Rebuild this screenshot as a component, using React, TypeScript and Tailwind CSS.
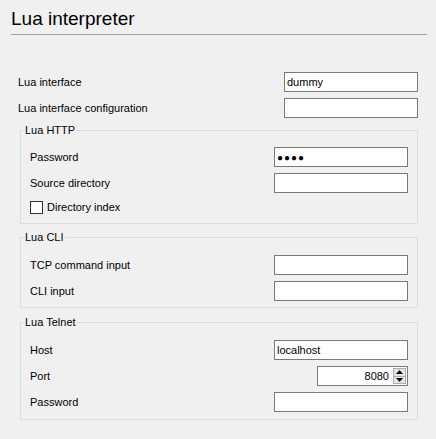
import type { ReactNode } from 'react'

const FONT = { fontFamily: '"Liberation Sans", Arial, sans-serif' }

function TextBox({ value = '', password = false }: { value?: string; password?: boolean }) {
  return (
    <div className="flex h-[20px] w-[134px] items-center border border-[#7a7a7a] bg-white px-[2px] text-[11px] text-black">
      {password ? <span className="text-[10px] tracking-[1px]">{'●'.repeat(value.length)}</span> : value}
    </div>
  )
}

function SpinBox({ value }: { value: string }) {
  return (
    <div className="flex h-[20px] w-[91px] items-center border border-[#7a7a7a] bg-white text-[11px] text-black">
      <span className="flex-1 pr-[4px] text-right">{value}</span>
      <div className="mr-[1px] flex h-[16px] w-[13px] flex-col border border-[#adadad] bg-[#e5e5e5]">
        <div className="flex flex-1 items-center justify-center border-b border-[#adadad]">
          <svg width="7" height="4" viewBox="0 0 7 4">
            <path d="M0 4 L3.5 0 L7 4 Z" fill="#000" />
          </svg>
        </div>
        <div className="flex flex-1 items-center justify-center">
          <svg width="7" height="4" viewBox="0 0 7 4">
            <path d="M0 0 L3.5 4 L7 0 Z" fill="#000" />
          </svg>
        </div>
      </div>
    </div>
  )
}

function Row({ label, children }: { label: string; children: ReactNode }) {
  return (
    <div className="flex h-[20px] items-center justify-between">
      <span className="text-[11px] text-black">{label}</span>
      {children}
    </div>
  )
}

function Group({ title, className, children }: { title: string; className?: string; children: ReactNode }) {
  return (
    <div className={`relative border border-[#dcdcdc] pl-[9px] pr-[9px] ${className ?? ''}`}>
      <span className="absolute -top-[7px] left-[3px] bg-[#f0f0f0] px-[1px] text-[11px] leading-[13px] text-black">
        {title}
      </span>
      {children}
    </div>
  )
}

export default function App() {
  return (
    <div className="h-[439px] w-[436px] overflow-hidden bg-[#f0f0f0]" style={FONT}>
      <div className="pl-[11px] pr-[9px] pt-[7px]">
        <h1 className="text-[19px] leading-[24px] text-black">Lua interpreter</h1>
        <div className="mt-[3px] h-px bg-[#a0a0a0]" />
      </div>

      <div className="mt-[37px] pl-[18px] pr-[18px]">
        <div className="flex flex-col gap-[6px]">
          <Row label="Lua interface">
            <TextBox value="dummy" />
          </Row>
          <Row label="Lua interface configuration">
            <TextBox />
          </Row>
        </div>
      </div>

      <div className="ml-[20px] mr-[18px]">
        <Group title="Lua HTTP" className="mt-[12px] pb-[9px] pt-[16px]">
          <div className="flex flex-col gap-[6px]">
            <Row label="Password">
              <TextBox value="aaaa" password />
            </Row>
            <Row label="Source directory">
              <TextBox />
            </Row>
          </div>
          <label className="mt-[8px] flex h-[13px] items-center gap-[4px] text-[11px] text-black">
            <span className="h-[13px] w-[13px] border border-[#333] bg-white" />
            Directory index
          </label>
        </Group>

        <Group title="Lua CLI" className="mt-[13px] pb-[6px] pt-[17px]">
          <div className="flex flex-col gap-[6px]">
            <Row label="TCP command input">
              <TextBox />
            </Row>
            <Row label="CLI input">
              <TextBox />
            </Row>
          </div>
        </Group>

        <Group title="Lua Telnet" className="mt-[14px] pb-[7px] pt-[17px]">
          <div className="flex flex-col gap-[6px]">
            <Row label="Host">
              <TextBox value="localhost" />
            </Row>
            <Row label="Port">
              <SpinBox value="8080" />
            </Row>
            <Row label="Password">
              <TextBox />
            </Row>
          </div>
        </Group>
      </div>
    </div>
  )
}
